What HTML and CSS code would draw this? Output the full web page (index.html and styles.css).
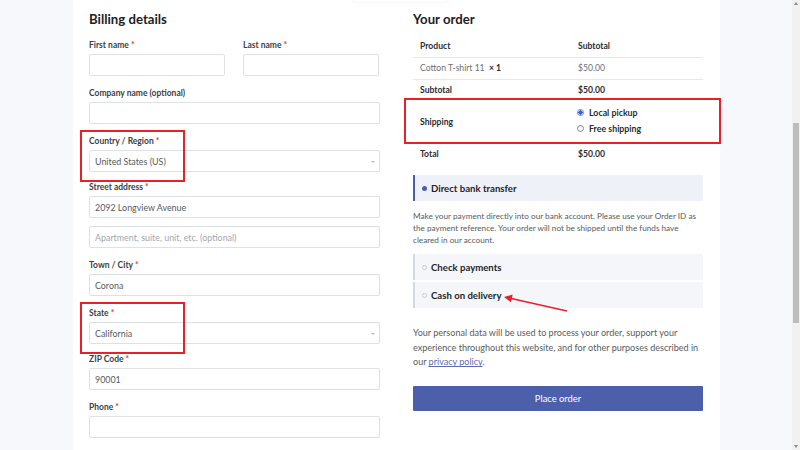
FILE: index.html
```html
<!DOCTYPE html>
<html lang="en">
<head>
<meta charset="utf-8">
<title>Checkout</title>
<link rel="stylesheet" href="styles.css">
</head>
<body>
<div class="page">
  <div class="sheet">
    <div class="topnub"></div>
    <section class="billing">
      <h2 class="title">Billing details</h2>
      <div class="row2">
        <div class="field">
          <label>First name <span class="req">*</span></label>
          <div class="input"></div>
        </div>
        <div class="field">
          <label>Last name <span class="req">*</span></label>
          <div class="input"></div>
        </div>
      </div>
      <div class="field">
        <label>Company name (optional)</label>
        <div class="input"></div>
      </div>
      <div class="field sel marked">
        <label>Country / Region <span class="req">*</span></label>
        <div class="input select">United States (US)<span class="caret"></span></div>
      </div>
      <div class="field">
        <label>Street address <span class="req">*</span></label>
        <div class="input">2092 Longview Avenue</div>
        <div class="input placeholder">Apartment, suite, unit, etc. (optional)</div>
      </div>
      <div class="field">
        <label>Town / City <span class="req">*</span></label>
        <div class="input">Corona</div>
      </div>
      <div class="field sel marked">
        <label>State <span class="req">*</span></label>
        <div class="input select">California<span class="caret"></span></div>
      </div>
      <div class="field">
        <label>ZIP Code <span class="req">*</span></label>
        <div class="input">90001</div>
      </div>
      <div class="field">
        <label>Phone <span class="req">*</span></label>
        <div class="input"></div>
      </div>
    </section>

    <section class="order">
      <h2 class="title order-title">Your order</h2>
      <div class="otable">
        <div class="orow head lined">
          <div>Product</div>
          <div>Subtotal</div>
        </div>
        <div class="orow item lined">
          <div>Cotton T-shirt 11&nbsp; <strong>×&nbsp;1</strong></div>
          <div>$50.00</div>
        </div>
        <div class="orow bold">
          <div>Subtotal</div>
          <div>$50.00</div>
        </div>
        <div class="orow ship">
          <div class="ship-label">Shipping</div>
          <div class="ship-opts">
            <div class="opt"><span class="radio on"></span>Local pickup</div>
            <div class="opt"><span class="radio"></span>Free shipping</div>
          </div>
        </div>
        <div class="orow bold">
          <div>Total</div>
          <div>$50.00</div>
        </div>
      </div>

      <div class="payments">
        <div class="pm active"><span class="dot"></span>Direct bank transfer</div>
        <p class="pm-desc">Make your payment directly into our bank account. Please use your Order ID as the payment reference. Your order will not be shipped until the funds have cleared in our account.</p>
        <div class="pm"><span class="ring"></span>Check payments</div>
        <div class="pm"><span class="ring"></span>Cash on delivery</div>
      </div>

      <svg class="arrow" width="70" height="22" viewBox="0 0 70 22">
        <line x1="64" y1="18" x2="6" y2="5" stroke="#e8202a" stroke-width="1.6"/>
        <polygon points="1,4 9.6,1.6 8,9.2" fill="#e8202a"/>
      </svg>

      <p class="privacy">Your personal data will be used to process your order, support your experience throughout this website, and for other purposes described in our <a href="#">privacy policy</a>.</p>

      <button class="place" type="button">Place order</button>
    </section>
  </div>

  <div class="scrollbar">
    <span class="sb-up"></span>
    <div class="sb-thumb"></div>
    <span class="sb-down"></span>
  </div>
</div>
</body>
</html>
```

FILE: styles.css
```css
* { box-sizing: border-box; }

html, body {
  margin: 0;
  padding: 0;
  height: 450px;
  overflow: hidden;
  background: #f7f8fb;
  font-family: Lato, "Noto Sans", sans-serif;
  color: #333;
}

.page {
  width: 800px;
  height: 450px;
  position: relative;
}

.sheet {
  position: relative;
  margin-left: 73px;
  width: 647px;
  height: 450px;
  background: #fff;
  padding: 8px 17px 0 16px;
  display: grid;
  grid-template-columns: 291px 290px;
  column-gap: 33px;
  align-items: start;
}

.topnub {
  position: absolute;
  top: -6px;
  left: 279px;
  width: 96px;
  height: 8px;
  border-radius: 4px;
  background: #fff;
  box-shadow: 0 0 2px rgba(0,0,0,0.12);
}

.title {
  margin: 0 0 9px;
  font-size: 13.2px;
  line-height: 22px;
  font-weight: 700;
  color: #1e2025;
}

/* Billing */
.row2 {
  display: grid;
  grid-template-columns: 136px 136px;
  column-gap: 18px;
}

.field {
  position: relative;
  margin-bottom: 11px;
}

.field.sel { margin-bottom: 9px; }

.field label {
  display: block;
  height: 12px;
  line-height: 12px;
  margin-bottom: 3px;
  font-size: 8.5px;
  font-weight: 700;
  color: #3d3f44;
}

.req { color: #e2401c; }

.input {
  height: 22px;
  border: 1px solid #dde0e6;
  border-radius: 2px;
  padding: 0 5px;
  display: flex;
  align-items: center;
  font-size: 8.9px;
  color: #555a61;
  background: #fff;
}

.input + .input { margin-top: 8px; }

.input.placeholder { color: #a3a7ad; }

.input.select { position: relative; }

.caret {
  position: absolute;
  right: 4px;
  top: 10px;
  width: 0;
  height: 0;
  border-left: 2px solid transparent;
  border-right: 2px solid transparent;
  border-top: 2px solid #bbb;
}

.field.marked::after {
  content: "";
  position: absolute;
  left: -9px;
  top: -5px;
  width: 101px;
  height: 48px;
  border: 2px solid #e8202a;
}

/* Order */
.order { position: relative; }

.order-title { margin-bottom: 6px; }

.orow {
  display: grid;
  grid-template-columns: 158px 1fr;
  font-size: 8.6px;
  line-height: 13px;
  color: #3d3f44;
}

.orow > div { padding: 4px 7px; }

.orow.lined { border-bottom: 1px solid #e6e8ec; }

.orow.head, .orow.bold { font-weight: 700; color: #2b2d31; }

.orow.item { color: #6b6f75; }
.orow.item strong { color: #2b2d31; }

.orow.ship { position: relative; }

.orow.ship::after {
  content: "";
  position: absolute;
  left: -9px;
  right: -18px;
  top: -3px;
  bottom: 0;
  border: 2px solid #e8202a;
}

.ship-label {
  align-self: center;
  font-weight: 700;
  color: #2b2d31;
}

.orow > .ship-opts { padding: 3px 6px 8px; }

.opt {
  display: flex;
  align-items: center;
  height: 16px;
  font-size: 8.8px;
  font-weight: 700;
  color: #2b2d31;
}

.radio {
  width: 7px;
  height: 7px;
  border-radius: 50%;
  border: 1px solid #888;
  margin-right: 5px;
  background: #fff;
}

.radio.on {
  border-color: #6f86d6;
  background: radial-gradient(circle, #3f5fd0 0 2px, #dfe6fb 2.2px);
}

.payments { margin-top: 10px; }

.pm {
  height: 26px;
  display: flex;
  align-items: center;
  padding-left: 7px;
  background: #f4f6f9;
  border-left: 2px solid #d3d8e1;
  font-size: 9.6px;
  font-weight: 700;
  color: #23252a;
}

.pm + .pm { margin-top: 2px; }

.pm.active {
  background: #eef1f7;
  border-left-color: #4c5fad;
}

.dot {
  width: 5px;
  height: 5px;
  border-radius: 50%;
  background: #4c5fad;
  margin-right: 4px;
}

.ring {
  width: 5px;
  height: 5px;
  border-radius: 50%;
  border: 1px solid #c7ccd4;
  margin-right: 4px;
}

.pm-desc {
  margin: 10px 0 8px;
  padding-right: 3px;
  font-size: 8.2px;
  line-height: 11.8px;
  color: #575b61;
}

.arrow {
  position: absolute;
  left: 90px;
  top: 285px;
}

.privacy {
  margin: 18px 0 0;
  font-size: 9.05px;
  line-height: 14.5px;
  color: #575b61;
}

.privacy a {
  color: #5a6db0;
  text-decoration: underline;
}

.place {
  display: block;
  width: 100%;
  height: 25px;
  margin-top: 16px;
  border: 0;
  border-radius: 1px;
  background: #4b5fab;
  color: #fff;
  font-family: inherit;
  font-size: 9.4px;
}

/* Scrollbar */
.scrollbar {
  position: absolute;
  top: 0;
  right: 0;
  width: 8px;
  height: 450px;
  background: #f1f1f1;
}

.sb-thumb {
  position: absolute;
  top: 123px;
  left: 1px;
  width: 6px;
  height: 200px;
  background: #bdbdbd;
}

.sb-up, .sb-down {
  position: absolute;
  left: 2px;
  width: 0;
  height: 0;
  border-left: 2px solid transparent;
  border-right: 2px solid transparent;
}

.sb-up { top: 2px; border-bottom: 3px solid #8a8a8a; }
.sb-down { bottom: 2px; border-top: 3px solid #8a8a8a; }
```
